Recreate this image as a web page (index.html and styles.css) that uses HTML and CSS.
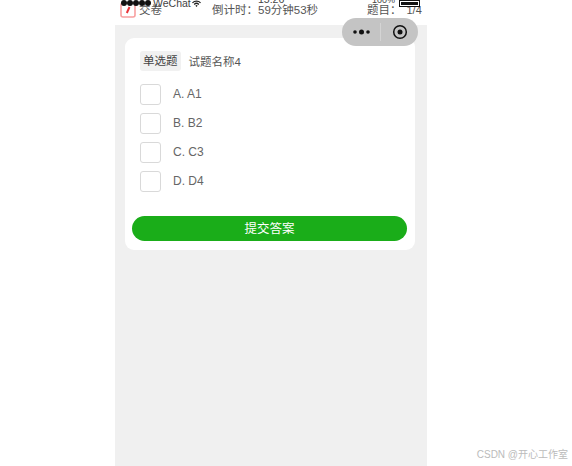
FILE: index.html
```html
<!DOCTYPE html>
<html lang="zh">
<head>
<meta charset="utf-8">
<title>答题</title>
<link rel="stylesheet" href="styles.css">
</head>
<body>
<div class="phone">
  <header class="topbar">
    <span class="hand"><svg viewBox="0 0 16 16" width="16" height="16"><rect x="1" y="1" width="14" height="14" rx="2" fill="#fff" stroke="#f8a0a0" stroke-width="1.600"/><path d="M9.500 5L6.800 11" stroke="#e8353a" stroke-width="2"/></svg><span class="hand-label">交卷</span></span>
    <span class="timer">倒计时：59分钟53秒</span>
    <span class="count">题目：<span class="num">1/4</span></span>
  </header>
  <div class="status">
    <span class="carrier"><span class="dots"><i></i><i></i><i></i><i></i><i></i></span>WeChat
      <svg class="wifi" viewBox="0 0 12 9" width="9" height="7"><path d="M0 3a8.500 8.500 0 0 1 12 0l-1.200 1.200a6.800 6.800 0 0 0-9.600 0zM2.300 5.200a5.200 5.200 0 0 1 7.400 0L8.500 6.400a3.500 3.500 0 0 0-5 0zM4.500 7.400a2.100 2.100 0 0 1 3 0L6 9z" fill="#222"/></svg>
    </span>
    <span class="time">15:26</span>
    <span class="pct">100%</span>
    <span class="battery"><b></b></span>
  </div>
  <div class="capsule">
    <svg class="cap-dots" viewBox="0 0 20 6" width="20" height="6"><circle cx="3" cy="3" r="1.800" fill="#111"/><circle cx="9.500" cy="3" r="2.500" fill="#111"/><circle cx="16" cy="3" r="1.800" fill="#111"/></svg>
    <span class="sep"></span>
    <svg class="cap-home" viewBox="0 0 16 16" width="16" height="16"><circle cx="8" cy="8" r="6.300" fill="none" stroke="#111" stroke-width="1.500"/><circle cx="8" cy="8" r="2.500" fill="#111"/></svg>
  </div>
  <main class="body">
    <section class="card">
      <div class="question"><span class="tag">单选题</span><span class="qtitle">试题名称4</span></div>
      <ul class="options">
        <li class="option"><span class="box"></span><span class="opt-text">A. A1</span></li>
        <li class="option"><span class="box"></span><span class="opt-text">B. B2</span></li>
        <li class="option"><span class="box"></span><span class="opt-text">C. C3</span></li>
        <li class="option"><span class="box"></span><span class="opt-text">D. D4</span></li>
      </ul>
      <button class="submit">提交答案</button>
    </section>
  </main>
</div>
<div class="mark">CSDN @开心工作室</div>
</body>
</html>
```
FILE: styles.css
```css
* { box-sizing: border-box; }
html, body { margin: 0; height: 100%; }
body {
  position: relative;
  width: 572px;
  height: 466px;
  overflow: hidden;
  background: #fff;
  font-family: "Liberation Sans", "Noto Sans CJK SC", sans-serif;
  color: #555;
}
.phone {
  position: relative;
  width: 312px;
  height: 466px;
  margin-left: 115px;
  display: flex;
  flex-direction: column;
  background: #fff;
}
.status {
  position: absolute;
  left: 0;
  top: 0;
  width: 100%;
  height: 10px;
  font-size: 10.500px;
  color: #444;
}
.carrier { position: absolute; left: 6px; top: -3px; height: 12px; line-height: 12px; display: flex; align-items: center; }
.dots { display: flex; margin-right: 2px; }
.dots i { width: 6px; height: 6px; border-radius: 50%; background: #111; }
.wifi { margin-left: 1px; }
.time { position: absolute; left: 143px; top: -7px; line-height: 12px; }
.pct { position: absolute; left: 257px; top: -6px; line-height: 12px; font-size: 9px; }
.battery {
  position: absolute;
  left: 284px;
  top: 0;
  width: 21px;
  height: 7px;
  padding: 1px;
  border: 1px solid #111;
  background: #fff;
}
.battery b { display: block; height: 100%; background: #111; }
.topbar {
  position: relative;
  height: 25px;
  flex: none;
  font-size: 11.500px;
  line-height: 16px;
  color: #555;
}
.hand { position: absolute; left: 5px; top: 2px; display: flex; align-items: flex-start; }
.hand svg { display: block; }
.hand-label { margin-left: 3px; }
.timer { position: absolute; left: 97px; top: 2px; white-space: nowrap; }
.count { position: absolute; left: 252px; top: 2px; white-space: nowrap; }
.num { font-size: 11px; margin-left: 5px; }
.capsule {
  position: absolute;
  left: 227px;
  top: 18px;
  width: 76px;
  height: 28px;
  border-radius: 14px;
  background: #c4c4c4;
  display: flex;
  align-items: center;
}
.cap-dots { margin-left: 10px; }
.sep { width: 1px; height: 18px; margin-left: 8px; background: #d4d4d4; }
.cap-home { margin-left: 11px; }
.body {
  flex: 1;
  background: #f0f0f0;
  padding: 13px 12px 0 10px;
}
.card {
  background: #fff;
  border-radius: 9px;
  height: 212px;
  padding: 13px 8px 0 7px;
}
.question { display: flex; align-items: center; padding-left: 8px; height: 20px; font-size: 11.500px; }
.tag {
  background: #f1f1f1;
  border-radius: 3px;
  height: 20px;
  line-height: 20px;
  padding: 0 3px;
  color: #444;
}
.qtitle { margin-left: 8px; }
.options { list-style: none; margin: 13px 0 0; padding: 0 0 0 8px; }
.option { display: flex; align-items: center; height: 21px; margin-bottom: 8px; font-size: 12px; color: #666; }
.opt-text { padding-bottom: 2px; }
.box {
  width: 21px;
  height: 21px;
  border: 1px solid #d9d9d9;
  border-radius: 3px;
  background: #fff;
  margin-right: 12px;
}
.submit {
  display: block;
  width: 275px;
  height: 25px;
  margin: 24px 0 0;
  padding: 1px 0 0;
  border: 0;
  border-radius: 13px;
  background: #1aad19;
  color: #fff;
  font-family: inherit;
  font-size: 12.500px;
  line-height: 24px;
  text-align: center;
}
.mark {
  position: absolute;
  right: 4px;
  bottom: 4px;
  font-size: 10px;
  line-height: 14px;
  color: #bbb;
}
```
